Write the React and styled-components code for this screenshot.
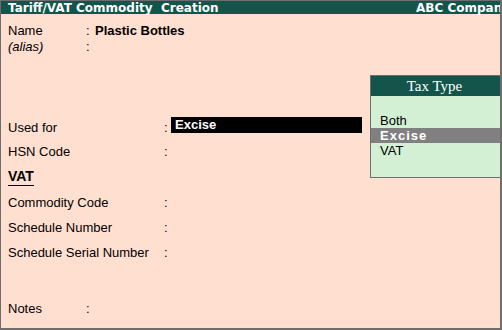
import React from 'react';
import styled, { createGlobalStyle } from 'styled-components';

const Global = createGlobalStyle`
  html, body {
    margin: 0;
    padding: 0;
    background: #ffdfd0;
  }
  * {
    box-sizing: border-box;
  }
`;

const Window = styled.div`
  position: relative;
  width: 502px;
  height: 330px;
  background: #ffdfd0;
  border-top: 1px solid #6e6e6e;
  border-left: 1px solid #6e6e6e;
  border-right: 2px solid #6e6e6e;
  border-bottom: 2px solid #6e6e6e;
  font-family: 'Liberation Sans', Arial, sans-serif;
  font-size: 13px;
  color: #000;
  overflow: hidden;
`;

const TitleBar = styled.div`
  display: flex;
  justify-content: space-between;
  align-items: center;
  height: 13px;
  background: #13554a;
  color: #fff;
  font-family: 'DejaVu Sans', Verdana, sans-serif;
  font-weight: bold;
  font-size: 12px;
  padding-left: 7px;
  white-space: pre;
`;

const Company = styled.div`
  width: 84px;
  overflow: hidden;
  white-space: nowrap;
`;

const Body = styled.div`
  display: flex;
  flex-direction: column;
  padding: 8px 0 0 7px;
`;

const Row = styled.div`
  display: flex;
  align-items: center;
  height: ${p => p.h || 25}px;
  margin-top: ${p => p.mt || 0}px;
`;

const Label = styled.div`
  width: ${p => p.w}px;
  font-style: ${p => (p.italic ? 'italic' : 'normal')};
`;

const Colon = styled.div`
  width: ${p => p.w || 9}px;
`;

const Value = styled.div`
  font-weight: bold;
`;

const Selected = styled.div`
  width: 191px;
  height: 16px;
  margin-top: -4px;
  background: #000;
  color: #fff;
  font-weight: bold;
  font-size: 13px;
  line-height: 16px;
  padding-left: 4px;
`;

const Heading = styled.div`
  font-weight: bold;
  font-size: 14px;
  padding-bottom: 1px;
  border-bottom: 1px solid #000;
`;

const Popup = styled.div`
  position: absolute;
  left: 369px;
  top: 74px;
  width: 135px;
  height: 103px;
  border: 1px solid #6e6e6e;
  background: #d3f0d5;
`;

const PopupHeader = styled.div`
  height: 20px;
  background: #13554a;
  color: #fff;
  font-family: 'Liberation Serif', 'Times New Roman', serif;
  font-size: 15px;
  line-height: 20px;
  text-align: center;
  padding-right: 6px;
`;

const List = styled.div`
  display: flex;
  flex-direction: column;
  padding-top: 17px;
`;

const Item = styled.div`
  height: 15px;
  line-height: 15px;
  padding-left: 9px;
  background: ${p => (p.active ? '#808080' : 'transparent')};
  color: ${p => (p.active ? '#fff' : '#000')};
  font-weight: ${p => (p.active ? 'bold' : 'normal')};
  letter-spacing: ${p => (p.active ? '1px' : '0')};
  font-size: 13px;
`;

const taxTypes = ['Both', 'Excise', 'VAT'];

export default function App() {
  return (
    <>
      <Global />
      <Window>
        <TitleBar>
          <span>Tariff/VAT Commodity  Creation</span>
          <Company>ABC Company</Company>
        </TitleBar>
        <Body>
          <Row h={16}>
            <Label w={78}>Name</Label>
            <Colon>:</Colon>
            <Value>Plastic Bottles</Value>
          </Row>
          <Row h={16}>
            <Label w={78} italic>(alias)</Label>
            <Colon>:</Colon>
          </Row>
          <Row mt={61} h={24}>
            <Label w={156}>Used for</Label>
            <Colon w={7}>:</Colon>
            <Selected>Excise</Selected>
          </Row>
          <Row h={24}>
            <Label w={156}>HSN Code</Label>
            <Colon>:</Colon>
          </Row>
          <Row h={27}>
            <Heading>VAT</Heading>
          </Row>
          <Row>
            <Label w={156}>Commodity Code</Label>
            <Colon>:</Colon>
          </Row>
          <Row>
            <Label w={156}>Schedule Number</Label>
            <Colon>:</Colon>
          </Row>
          <Row>
            <Label w={156}>Schedule Serial Number</Label>
            <Colon>:</Colon>
          </Row>
          <Row mt={31} h={24}>
            <Label w={78}>Notes</Label>
            <Colon>:</Colon>
          </Row>
        </Body>
        <Popup>
          <PopupHeader>Tax Type</PopupHeader>
          <List>
            {taxTypes.map(t => (
              <Item key={t} active={t === 'Excise'}>{t}</Item>
            ))}
          </List>
        </Popup>
      </Window>
    </>
  );
}
